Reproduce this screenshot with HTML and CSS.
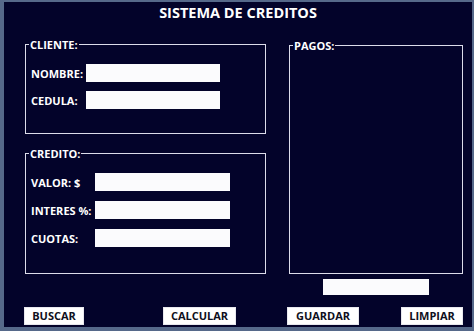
FILE: index.html
```html
<!DOCTYPE html>
<html lang="es">
<head>
<meta charset="utf-8">
<title>Sistema de Creditos</title>
<link rel="stylesheet" href="styles.css">
</head>
<body>
<div class="window">
  <h1 class="title">SISTEMA DE CREDITOS</h1>
  <div class="main">
    <div class="col col-left">
      <section class="group group-cliente">
        <span class="legend">CLIENTE:</span>
        <div class="row"><label class="lbl">NOMBRE:</label><input class="field" type="text"></div>
        <div class="row"><label class="lbl">CEDULA:</label><input class="field" type="text"></div>
      </section>
      <section class="group group-credito">
        <span class="legend">CREDITO:</span>
        <div class="row"><label class="lbl">VALOR: $</label><input class="field" type="text"></div>
        <div class="row"><label class="lbl">INTERES %:</label><input class="field" type="text"></div>
        <div class="row"><label class="lbl">CUOTAS:</label><input class="field" type="text"></div>
      </section>
      <div class="buttons buttons-left">
        <button class="btn btn-buscar">BUSCAR</button>
        <button class="btn btn-calcular">CALCULAR</button>
      </div>
    </div>
    <div class="col col-right">
      <section class="group group-pagos">
        <span class="legend">PAGOS:</span>
      </section>
      <input class="field field-total" type="text">
      <div class="buttons buttons-right">
        <button class="btn btn-guardar">GUARDAR</button>
        <button class="btn btn-limpiar">LIMPIAR</button>
      </div>
    </div>
  </div>
</div>
</body>
</html>
```
FILE: styles.css
```css
* { box-sizing: border-box; }
html, body {
  margin: 0;
  padding: 0;
  background: #56698a;
  width: 474px;
  height: 331px;
  overflow: hidden;
  font-family: "Open Sans", "Noto Sans", sans-serif;
}
.window {
  margin: 2px 0 0 4px;
  width: 468px;
  height: 325px;
  background: #03032a;
  padding: 0 9px 0 21px;
  display: flex;
  flex-direction: column;
}
.title {
  margin: 0;
  padding-top: 1px;
  height: 20px;
  line-height: 19px;
  font-size: 14.5px;
  font-weight: 700;
  color: #ffffff;
  text-align: center;
  margin-left: -21px;
  margin-right: -9px;
}
.main {
  margin-top: 22px;
  display: flex;
  gap: 23px;
}
.col {
  display: flex;
  flex-direction: column;
}
.col-left { width: 241px; }
.col-right { width: 174px; align-items: center; }
.group {
  position: relative;
  border: 1px solid #dcdcea;
  width: 100%;
}
.legend {
  position: absolute;
  top: -7px;
  left: 3px;
  padding: 0 1px;
  background: #03032a;
  color: #ffffff;
  font-size: 11px;
  line-height: 13px;
  font-weight: 700;
}
.group-cliente {
  height: 90px;
  padding: 19px 0 0 5px;
  display: flex;
  flex-direction: column;
  gap: 9px;
}
.group-credito {
  margin-top: 19px;
  height: 121px;
  padding: 19px 0 0 5px;
  display: flex;
  flex-direction: column;
  gap: 10px;
}
.group-pagos {
  margin-top: 1px;
  height: 229px;
}
.row {
  display: flex;
  align-items: center;
  height: 18px;
}
.lbl {
  color: #ffffff;
  font-size: 11px;
  font-weight: 700;
  line-height: 13px;
  white-space: nowrap;
}
.group-cliente .lbl { width: 55px; }
.group-credito .lbl { width: 64px; }
.field {
  border: none;
  background: #fbfbfd;
  height: 18px;
  padding: 0;
  margin: 0;
  outline: none;
}
.group-cliente .field { width: 134px; }
.group-credito .field { width: 135px; }
.field-total {
  margin-top: 5px;
  width: 106px;
  height: 16px;
}
.buttons {
  display: flex;
  width: 100%;
}
.buttons-left {
  margin-top: 33px;
}
.buttons-right {
  margin-top: 12px;
  justify-content: space-between;
  width: 176px;
  margin-left: -2px;
}
.btn {
  height: 18px;
  padding: 0;
  margin: 0;
  border: 1px solid #e8e8ee;
  background: #ffffff;
  color: #101020;
  font-family: "Open Sans", "Noto Sans", sans-serif;
  font-size: 11px;
  font-weight: 700;
  line-height: 16px;
  text-align: center;
}
.btn-buscar { width: 60px; margin-left: -1px; }
.btn-calcular { width: 73px; margin-left: 79px; }
.btn-guardar { width: 72px; }
.btn-limpiar { width: 62px; }
```
